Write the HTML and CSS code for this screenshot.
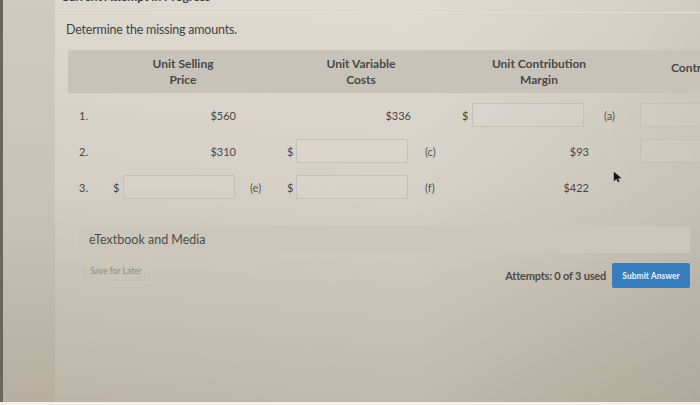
FILE: index.html
```html
<!DOCTYPE html>
<html>
<head>
<meta charset="utf-8">
<link rel="stylesheet" href="styles.css">
</head>
<body>
<div class="screen">
  <div class="edge"></div>
  <div class="gutter"></div>
  <div class="main">
    <div class="topbar"><span class="title">Current Attempt in Progress</span></div>
    <p class="prompt">Determine the missing amounts.</p>

    <div class="thead">
      <div class="th">Unit Selling<br>Price</div>
      <div class="th">Unit Variable<br>Costs</div>
      <div class="th">Unit Contribution<br>Margin</div>
      <div class="th th-last">Contr</div>
    </div>

    <div class="rows">
      <div class="row">
        <span class="num">1.</span>
        <span class="cur"></span>
        <span class="val">$560</span>
        <span class="lbl"></span>
        <span class="cur"></span>
        <span class="val">$336</span>
        <span class="lbl"></span>
        <span class="cur">$</span>
        <span class="cell"><span class="input"></span></span>
        <span class="lbl">(a)</span>
        <span class="cell"><span class="input wide"></span></span>
      </div>
      <div class="row">
        <span class="num">2.</span>
        <span class="cur"></span>
        <span class="val">$310</span>
        <span class="lbl"></span>
        <span class="cur">$</span>
        <span class="cell"><span class="input"></span></span>
        <span class="lbl">(c)</span>
        <span class="cur"></span>
        <span class="val">$93</span>
        <span class="lbl"></span>
        <span class="cell"><span class="input wide"></span></span>
      </div>
      <div class="row">
        <span class="num">3.</span>
        <span class="cur">$</span>
        <span class="cell"><span class="input"></span></span>
        <span class="lbl">(e)</span>
        <span class="cur">$</span>
        <span class="cell"><span class="input"></span></span>
        <span class="lbl">(f)</span>
        <span class="cur"></span>
        <span class="val">$422</span>
        <span class="lbl"></span>
        <span class="cell"></span>
      </div>
      <svg class="pointer" width="9" height="12" viewBox="0 0 9 12"><path d="M1 1 L1 10 L3.4 7.8 L5 11 L6.3 10.4 L4.8 7.3 L8 7.1 Z" fill="#111" stroke="#333" stroke-width="0.5"/></svg>
    </div>

    <div class="media">eTextbook and Media</div>

    <div class="actions">
      <button class="save">Save for Later</button>
      <div class="submit-group">
        <span class="attempts">Attempts: 0 of 3 used</span>
        <button class="submit">Submit Answer</button>
      </div>
    </div>
  </div>
</div>
</body>
</html>
```

FILE: styles.css
```css
html, body {
  margin: 0;
  padding: 0;
  width: 700px;
  height: 405px;
  overflow: hidden;
}

body {
  font-family: Lato, "Open Sans", "Liberation Sans", sans-serif;
  color: #4a4844;
  background: #f2f0ea;
}

.screen {
  display: flex;
  height: 402px;
  background: linear-gradient(to bottom, #dbd7ce 0%, #d2cdc3 45%, #c3bdaf 75%, #b9b2a3 100%);
  overflow: hidden;
}

.edge {
  width: 3px;
  flex: none;
  background: #6b665c;
}

.gutter {
  width: 52px;
  flex: none;
  background: linear-gradient(to bottom, #d0cbc1 0%, #c8c3b7 50%, #b6af a0 100%);
  background: linear-gradient(to bottom, #d0cbc1 0%, #c8c3b7 50%, #b6afa0 100%);
}

.main {
  flex: 1;
  position: relative;
  overflow: hidden;
  background: linear-gradient(to right, rgba(255,255,255,0.05) 0%, rgba(255,255,255,0.1) 55%, rgba(0,0,0,0.02) 85%, rgba(0,0,0,0.05) 100%);
}

.topbar {
  height: 12px;
  border-bottom: 1px solid #e2ded6;
  overflow: hidden;
  position: relative;
}

.title {
  display: block;
  margin-top: -10px;
  padding-left: 6px;
  font-size: 12px;
  line-height: 14px;
  font-weight: 700;
  color: #3e3c38;
}

.prompt {
  margin: 0;
  padding: 9px 0 0 11px;
  height: 28px;
  box-sizing: border-box;
  font-size: 12.5px;
  line-height: 16px;
  color: #45433f;
  letter-spacing: -0.2px;
}

.thead {
  margin: 9px 0 0 13px;
  height: 43px;
  display: flex;
  align-items: center;
  padding-left: 26px;
  background: #c7c3ba;
  width: 760px;
}

.th {
  width: 178px;
  flex: none;
  text-align: center;
  font-size: 12px;
  line-height: 16px;
  font-weight: 700;
  color: #4a4844;
}

.th-last {
  align-self: flex-start;
  padding-top: 10px;
  text-align: left;
  padding-left: 43px;
  box-sizing: border-box;
}

.rows {
  position: relative;
  margin: 4px 0 0 13px;
}

.row {
  display: grid;
  grid-template-columns: 40px 15px 117px 42px 14px 119px 42px 15px 125px 39px 80px;
  height: 36px;
  align-items: center;
  font-size: 11px;
  color: #4a4844;
}

.num {
  padding-left: 11px;
}

.cur {
  padding-left: 5px;
}

.val {
  text-align: right;
  padding-right: 4px;
}

.row .val:nth-child(9) {
  padding-right: 8px;
}

.lbl {
  padding-left: 10px;
  color: #55534e;
}

.row .lbl:nth-child(10) {
  padding-left: 7px;
}

.cell {
  display: flex;
  align-items: center;
}

.input {
  display: block;
  width: 112px;
  height: 24px;
  box-sizing: border-box;
  border: 1.5px solid #c4c0b7;
  border-radius: 1px;
  background: rgba(255,255,255,0.06);
}

.input.wide {
  width: 70px;
  margin-left: 4px;
}

.pointer {
  position: absolute;
  left: 545px;
  top: 74px;
}

.media {
  margin: 21px 10px 0 24px;
  height: 27px;
  padding-left: 10px;
  display: flex;
  align-items: center;
  background: #cbc7bd;
  border-radius: 2px;
  font-size: 12.5px;
  color: #4f4d48;
}

.actions {
  margin: 6px 10px 0 25px;
  display: flex;
  justify-content: space-between;
  align-items: flex-start;
}

.save {
  font-family: Lato, "Open Sans", "Liberation Sans", sans-serif;
  font-size: 8.5px;
  color: #8f8b82;
  background: transparent;
  border: 1px solid #cdc9c0;
  border-radius: 2px;
  width: 72px;
  height: 24px;
  padding: 0;
}

.submit-group {
  display: flex;
  align-items: center;
  gap: 6px;
  margin-top: 4px;
}

.attempts {
  font-size: 11px;
  font-weight: 700;
  color: #4d4b47;
  letter-spacing: -0.2px;
}

.submit {
  font-family: Lato, "Open Sans", "Liberation Sans", sans-serif;
  font-size: 8.5px;
  font-weight: 700;
  color: #e8f0f8;
  background: #3a7dbd;
  border: none;
  border-radius: 2px;
  width: 78px;
  height: 25px;
  padding: 0;
}
```
